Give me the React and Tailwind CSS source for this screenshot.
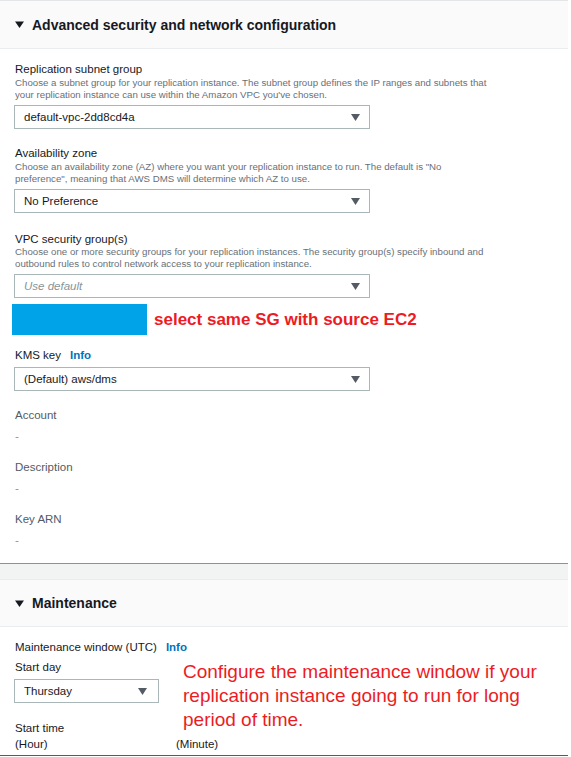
import React from "react";

const font = { fontFamily: '"Liberation Sans", Arial, sans-serif' };

function Caret() {
  return (
    <svg width="9" height="7" viewBox="0 0 9 7" className="shrink-0">
      <path d="M0 0.5 H9 L4.5 7 Z" fill="#16191f" />
    </svg>
  );
}

function Arrow() {
  return (
    <svg width="9" height="7" viewBox="0 0 9 7" className="shrink-0">
      <path d="M0 0 H9 L4.5 7 Z" fill="#545b64" />
    </svg>
  );
}

function Select({ value, placeholder, width = "w-[356px]", pr = "pr-[9px]" }) {
  return (
    <div
      className={`${width} h-[24px] border border-[#aab7b8] bg-white flex items-center justify-between pl-[9px] ${pr}`}
    >
      {placeholder ? (
        <span className="text-[11.5px] italic text-[#879596] leading-[14px]">{placeholder}</span>
      ) : (
        <span className="text-[11.5px] text-[#16191f] leading-[14px]">{value}</span>
      )}
      <Arrow />
    </div>
  );
}

function Header({ title }) {
  return (
    <div className="flex items-center gap-[8px] pl-[15px] bg-[#fafafa] border-b border-[#eaeded]">
      <Caret />
      <span className="text-[14px] font-bold text-[#16191f] leading-[18px]">{title}</span>
    </div>
  );
}

export default function App() {
  return (
    <div className="w-[571px] bg-white" style={font}>
      <div className="w-[568px]">
        <div className="border-t border-[#e3e6e6]">
          <div className="h-[48px] flex flex-col">
            <div className="flex-1 flex items-center gap-[8px] pl-[15px] bg-[#fafafa] border-b border-[#eaeded]">
              <Caret />
              <span className="text-[14px] font-bold text-[#16191f] leading-[18px]">
                Advanced security and network configuration
              </span>
            </div>
          </div>
        </div>

        <div className="px-[15px] pt-[13px] pb-[16px]">
          <div className="text-[11.5px] leading-[14px] text-[#16191f]">Replication subnet group</div>
          <div className="mt-[1px] text-[9.7px] leading-[12px] text-[#687078] w-[500px]">
            Choose a subnet group for your replication instance. The subnet group defines the IP ranges and subnets that
            <br />
            your replication instance can use within the Amazon VPC you've chosen.
          </div>
          <div className="mt-[4px] -ml-[1px]">
            <Select value="default-vpc-2dd8cd4a" />
          </div>

          <div className="mt-[17px] text-[11.5px] leading-[14px] text-[#16191f]">Availability zone</div>
          <div className="mt-[1px] text-[9.7px] leading-[12px] text-[#687078]">
            Choose an availability zone (AZ) where you want your replication instance to run. The default is "No
            <br />
            preference", meaning that AWS DMS will determine which AZ to use.
          </div>
          <div className="mt-[4px] -ml-[1px]">
            <Select value="No Preference" />
          </div>

          <div className="mt-[19px] text-[11.5px] leading-[14px] text-[#16191f]">VPC security group(s)</div>
          <div className="text-[9.7px] leading-[12px] text-[#687078]">
            Choose one or more security groups for your replication instances. The security group(s) specify inbound and
            <br />
            outbound rules to control network access to your replication instance.
          </div>
          <div className="mt-[4px] -ml-[1px]">
            <Select placeholder="Use default" />
          </div>

          <div className="mt-[6px] -ml-[3px] flex items-center h-[31px]">
            <div className="w-[135px] h-[31px] bg-[#00a2e8]" />
            <span className="ml-[7px] text-[17px] font-bold text-[#ec1c24] leading-[20px]">
              select same SG with source EC2
            </span>
          </div>

          <div className="mt-[13px] flex items-center gap-[9px] text-[11.5px] leading-[14px]">
            <span className="text-[#16191f]">KMS key</span>
            <span className="font-bold text-[#0073bb]">Info</span>
          </div>
          <div className="mt-[5px] -ml-[1px]">
            <Select value="(Default) aws/dms" />
          </div>

          <div className="mt-[17px] text-[11.5px] leading-[14px] text-[#545b64]">Account</div>
          <div className="mt-[7px] text-[11.5px] leading-[14px] text-[#879596]">-</div>
          <div className="mt-[17px] text-[11.5px] leading-[14px] text-[#545b64]">Description</div>
          <div className="mt-[7px] text-[11.5px] leading-[14px] text-[#879596]">-</div>
          <div className="mt-[17px] text-[11.5px] leading-[14px] text-[#545b64]">Key ARN</div>
          <div className="mt-[7px] text-[11.5px] leading-[14px] text-[#879596]">-</div>
        </div>

        <div className="border-t border-[#879596]">
          <div className="h-[16px] bg-[#f2f3f3] border-b border-[#eaeded]" />
          <div className="h-[47px] flex items-center gap-[8px] pl-[15px] bg-[#fafafa] border-b border-[#eaeded]">
            <Caret />
            <span className="text-[14px] font-bold text-[#16191f] leading-[18px]">Maintenance</span>
          </div>
        </div>

        <div className="relative px-[15px] pt-[13px] pb-[4px] border-b border-[#545b64]">
          <div className="flex items-center gap-[9px] text-[11.5px] leading-[14px]">
            <span className="text-[#16191f]">Maintenance window (UTC)</span>
            <span className="font-bold text-[#0073bb]">Info</span>
          </div>
          <div className="mt-[6px] text-[11.5px] leading-[14px] text-[#16191f]">Start day</div>
          <div className="mt-[5px] -ml-[1px]">
            <Select value="Thursday" width="w-[145px]" pr="pr-[11px]" />
          </div>
          <div className="mt-[18px] text-[11.5px] leading-[14px] text-[#16191f]">Start time</div>
          <div className="mt-[2px] flex text-[11.5px] leading-[14px] text-[#16191f]">
            <span className="w-[161px]">(Hour)</span>
            <span>(Minute)</span>
          </div>

          <div className="absolute left-[183px] top-[33px] text-[19px] leading-[24px] text-[#ec1c24] whitespace-nowrap">
            Configure the maintenance window if your
            <br />
            replication instance going to run for long
            <br />
            period of time.
          </div>
        </div>
      </div>
    </div>
  );
}
